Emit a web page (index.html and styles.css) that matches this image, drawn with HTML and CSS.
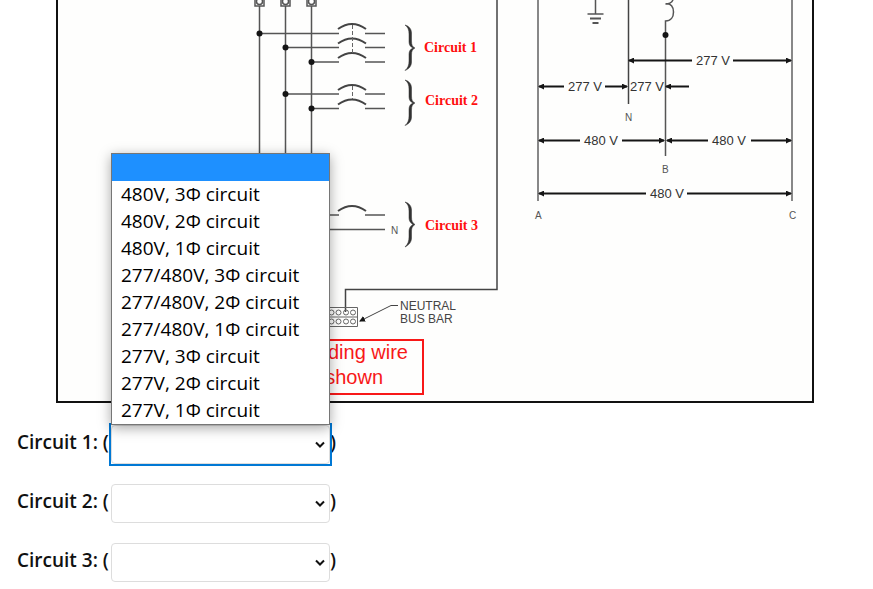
FILE: index.html
```html
<!DOCTYPE html>
<html lang="en">

<head>
    <meta charset="UTF-8">
    <meta name="viewport" content="width=device-width, initial-scale=1.0">
    <title>Panel Circuits</title>
    <link rel="stylesheet" href="styles.css">
</head>

<body>
    <div class="diagram">
        <svg viewBox="58 0 754 401" role="img" aria-label="Panelboard and transformer wiring diagram">
            <defs>
                <marker id="arrow" viewBox="0 0 6 6" refX="5" refY="3" markerWidth="6" markerHeight="6" markerUnits="userSpaceOnUse" orient="auto-start-reverse">
                    <path d="M0 0 L6 3 L0 6 Z" fill="#151515" />
                </marker>
            </defs>

            <!-- Panel bus lines and lugs -->
            <g class="wire">
                <path d="M259.5 6V290M285.5 6V290M311.5 6V290" />
                <path d="M255 0V6H264V0M281 0V6H290V0M307 0V6H316V0" />
                <circle cx="259.5" cy="1.5" r="3" fill="#fff" />
                <circle cx="285.5" cy="1.5" r="3" fill="#fff" />
                <circle cx="311.5" cy="1.5" r="3" fill="#fff" />
            </g>

            <!-- Breakers -->
            <g class="wire">
                <path d="M259 33.5H339M365 33.5H385M285 47.5H339M365 47.5H385M311 62H339M365 62H385" />
                <path d="M285 94H339M365 94H385M311 108.5H339M365 108.5H385" />
                <path d="M311 215H339M365 215H385M285 229.5H385" />
            </g>
            <g class="breaker">
                <path d="M338 29Q352 19 366 29M338 43.5Q352 33.5 366 43.5M338 58Q352 48 366 58" />
                <path d="M338 90Q352 80 366 90M338 104.5Q352 94.5 366 104.5" />
                <path d="M338 211Q352 201 366 211" />
            </g>
            <path class="tie" d="M352.5 25V53M352.5 86V99" />
            <g class="dot">
                <circle cx="259.5" cy="33.5" r="3" />
                <circle cx="285.5" cy="47.5" r="3" />
                <circle cx="311.5" cy="62" r="3" />
                <circle cx="285.5" cy="94" r="3" />
                <circle cx="311.5" cy="108.5" r="3" />
            </g>

            <!-- Braces -->
            <g class="brace">
                <path d="M405 25C409 26 411.500 29 411.500 33V41C411.500 45 412.500 47 415 48C412.500 49 411.500 51 411.500 55V62C411.500 66 409 69 405 70.500C408 68 409 65 409 61V54C409 51 410.500 49 413 48C410.500 47 409 45 409 42V34C409 30 408 27 405 25Z" />
                <path d="M405 80C409 81 411.500 84 411.500 88V96C411.500 100 412.500 102 415 103C412.500 104 411.500 106 411.500 110V117C411.500 121 409 124 405 125.500C408 123 409 120 409 116V109C409 106 410.500 104 413 103C410.500 102 409 100 409 97V89C409 85 408 82 405 80Z" />
                <path d="M405 202C409 203 411.500 206 411.500 210V217C411.500 221 412.500 223 415 224.500C412.500 226 411.500 228 411.500 231V238C411.500 242 409 245 405 247C408 244 409 241 409 237V231C409 228 410.500 226 413 224.500C410.500 223 409 221 409 218V211C409 207 408 204 405 202Z" />
            </g>
            <text class="circuit-name" x="424" y="52">Circuit 1</text>
            <text class="circuit-name" x="425" y="105">Circuit 2</text>
            <text class="circuit-name" x="425" y="230">Circuit 3</text>
            <text class="terminal" x="391" y="234">N</text>

            <!-- Neutral bus bar -->
            <path class="enclosure" d="M497 0V289.500H345.500V312" />
            <g class="bus">
                <path d="M300 307.500H357.500V326.500H300M300 317H357.500" />
                <circle cx="331.500" cy="312.500" r="2.500" />
                <circle cx="338.500" cy="312.500" r="2.500" />
                <circle cx="346" cy="312.500" r="2.500" />
                <circle cx="353" cy="312.500" r="2.500" />
                <circle cx="331.500" cy="321.500" r="2.500" />
                <circle cx="338.500" cy="321.500" r="2.500" />
                <circle cx="346" cy="321.500" r="2.500" />
                <circle cx="353" cy="321.500" r="2.500" />
            </g>
            <path class="leader" d="M398 305.500H391L360 321" marker-end="url(#arrow)" />
            <text class="bus-name" x="400" y="310">NEUTRAL</text>
            <text class="bus-name" x="400" y="323">BUS BAR</text>

            <!-- Note -->
            <rect class="note-box" x="200" y="340" width="223" height="54" />
            <text class="note" x="408" y="359">ding wire</text>
            <text class="note" x="383" y="384">shown</text>

            <!-- Transformer secondary -->
            <g class="phase">
                <path d="M538 0V201M792 0V201" />
            </g>
            <path class="enclosure" d="M628.500 0V104" />
            <g class="wire">
                <path d="M595.500 0V14M665.500 156V21C671 21 673.500 17 673.500 12C673.500 7 671 3 665.500 4C670 4 672 2 673 0" />
                <path d="M587.500 14H603.500" />
                <path d="M590 18.500H601M592.500 23H598.500" stroke-width="2" />
            </g>
            <circle class="dot" cx="665.500" cy="35" r="3" />

            <!-- Voltage dimensions -->
            <g class="dimension">
                <path d="M629 60.500H692" marker-start="url(#arrow)" />
                <path d="M733 60.500H791" marker-end="url(#arrow)" />
                <path d="M539 86.500H564" marker-start="url(#arrow)" />
                <path d="M605 86.500H627" marker-end="url(#arrow)" />
                <path d="M666 86.500H689" marker-start="url(#arrow)" />
                <path d="M539 140.500H580" marker-start="url(#arrow)" />
                <path d="M622 140.500H664" marker-end="url(#arrow)" />
                <path d="M667 140.500H708" marker-start="url(#arrow)" />
                <path d="M751 140.500H791" marker-end="url(#arrow)" />
                <path d="M539 193.500H646" marker-start="url(#arrow)" />
                <path d="M687 193.500H791" marker-end="url(#arrow)" />
            </g>
            <g class="voltage">
                <text x="696" y="65">277 V</text>
                <text x="568" y="91">277 V</text>
                <text x="630" y="91">277 V</text>
                <text x="584" y="145">480 V</text>
                <text x="712" y="145">480 V</text>
                <text x="650" y="198">480 V</text>
            </g>
            <g class="terminal">
                <text x="625" y="121">N</text>
                <text x="662" y="173">B</text>
                <text x="535" y="219">A</text>
                <text x="789" y="219">C</text>
            </g>
        </svg>
    </div>

    <form class="answers">
        <div class="answer">
            <label for="circuit1">Circuit 1: (</label>
            <div class="picker open">
                <select id="circuit1">
                    <option></option>
                </select>
                <ul class="options" role="listbox" aria-label="Circuit 1 options">
                    <li class="option selected" role="option" aria-selected="true"></li>
                    <li class="option" role="option">480V, 3Φ circuit</li>
                    <li class="option" role="option">480V, 2Φ circuit</li>
                    <li class="option" role="option">480V, 1Φ circuit</li>
                    <li class="option" role="option">277/480V, 3Φ circuit</li>
                    <li class="option" role="option">277/480V, 2Φ circuit</li>
                    <li class="option" role="option">277/480V, 1Φ circuit</li>
                    <li class="option" role="option">277V, 3Φ circuit</li>
                    <li class="option" role="option">277V, 2Φ circuit</li>
                    <li class="option" role="option">277V, 1Φ circuit</li>
                </ul>
            </div>
            <span class="close">)</span>
        </div>
        <div class="answer">
            <label for="circuit2">Circuit 2: (</label>
            <div class="picker">
                <select id="circuit2">
                    <option></option>
                </select>
            </div>
            <span class="close">)</span>
        </div>
        <div class="answer">
            <label for="circuit3">Circuit 3: (</label>
            <div class="picker">
                <select id="circuit3">
                    <option></option>
                </select>
            </div>
            <span class="close">)</span>
        </div>
    </form>
</body>

</html>
```
FILE: styles.css
```css
body {
    margin: 0;
    font-family: "Open Sans", "Noto Sans", sans-serif;
    font-size: 19px;
    color: #111;
    background-color: #fff;
}

.diagram {
    box-sizing: border-box;
    max-width: 758px;
    margin-left: 56px;
    border: 2px solid #111;
    border-top: none;
    background-color: #fefefd;
}

.diagram svg {
    display: block;
    width: 100%;
    height: auto;
    font-family: "Liberation Sans", Arial, sans-serif;
}

.wire {
    fill: none;
    stroke: #555;
    stroke-width: 1.5;
}

.breaker {
    fill: none;
    stroke: #444;
    stroke-width: 2;
}

.tie {
    stroke: #666;
    stroke-width: 1;
    stroke-dasharray: 4 2;
}

.dot {
    fill: #151515;
}

.brace {
    fill: #333;
    stroke: #333;
    stroke-width: 0.5;
}

.enclosure {
    fill: none;
    stroke: #444;
    stroke-width: 1.5;
}

.phase {
    stroke: #888;
    stroke-width: 2;
}

.bus {
    fill: none;
    stroke: #666;
    stroke-width: 1;
}

.leader {
    fill: none;
    stroke: #444;
    stroke-width: 1;
}

.dimension {
    stroke: #151515;
    stroke-width: 2;
}

.circuit-name {
    font-family: "Liberation Serif", "Times New Roman", serif;
    font-size: 14px;
    font-weight: bold;
    fill: #ff1010;
}

.bus-name {
    font-size: 12px;
    fill: #444;
}

.voltage {
    font-size: 13px;
    fill: #333;
}

.terminal {
    font-size: 10px;
    fill: #555;
}

.note-box {
    fill: none;
    stroke: #f81818;
    stroke-width: 2;
}

.note {
    font-size: 20px;
    text-anchor: end;
    fill: #f81818;
}

.answers {
    display: flex;
    flex-direction: column;
    gap: 20px;
    margin: 22px 17px 0;
}

.answer {
    display: flex;
    align-items: center;
}

.answer label,
.close {
    padding-bottom: 6px;
    font-weight: 600;
    white-space: nowrap;
}

.answer label {
    min-width: 94px;
}

.picker {
    position: relative;
    width: 219px;
}

.picker.open {
    outline: 2px solid #0078d4;
}

.picker select {
    display: block;
    box-sizing: border-box;
    width: 100%;
    height: 39px;
    padding: 5px 10px;
    border: 1px solid #ddd;
    border-radius: 4px;
    outline: none;
    font: inherit;
    color: #111;
    appearance: none;
    background: #fff url("data:image/svg+xml,%3Csvg xmlns='http://www.w3.org/2000/svg' width='10' height='7'%3E%3Cpath d='M1 1.5L5 5.500L9 1.500' fill='none' stroke='%23111' stroke-width='2'/%3E%3C/svg%3E") no-repeat right 4px center;
}

.options {
    position: absolute;
    bottom: 100%;
    left: 0;
    box-sizing: border-box;
    width: 100%;
    margin: 0;
    padding: 0;
    border: 1px solid #767676;
    list-style: none;
    background-color: #fff;
    box-shadow: 0 3px 12px rgba(0, 0, 0, 0.35);
}

.option {
    height: 27px;
    padding-left: 9px;
    line-height: 27px;
    color: #000;
}

.option.selected {
    background-color: #1e90ff;
}
```
